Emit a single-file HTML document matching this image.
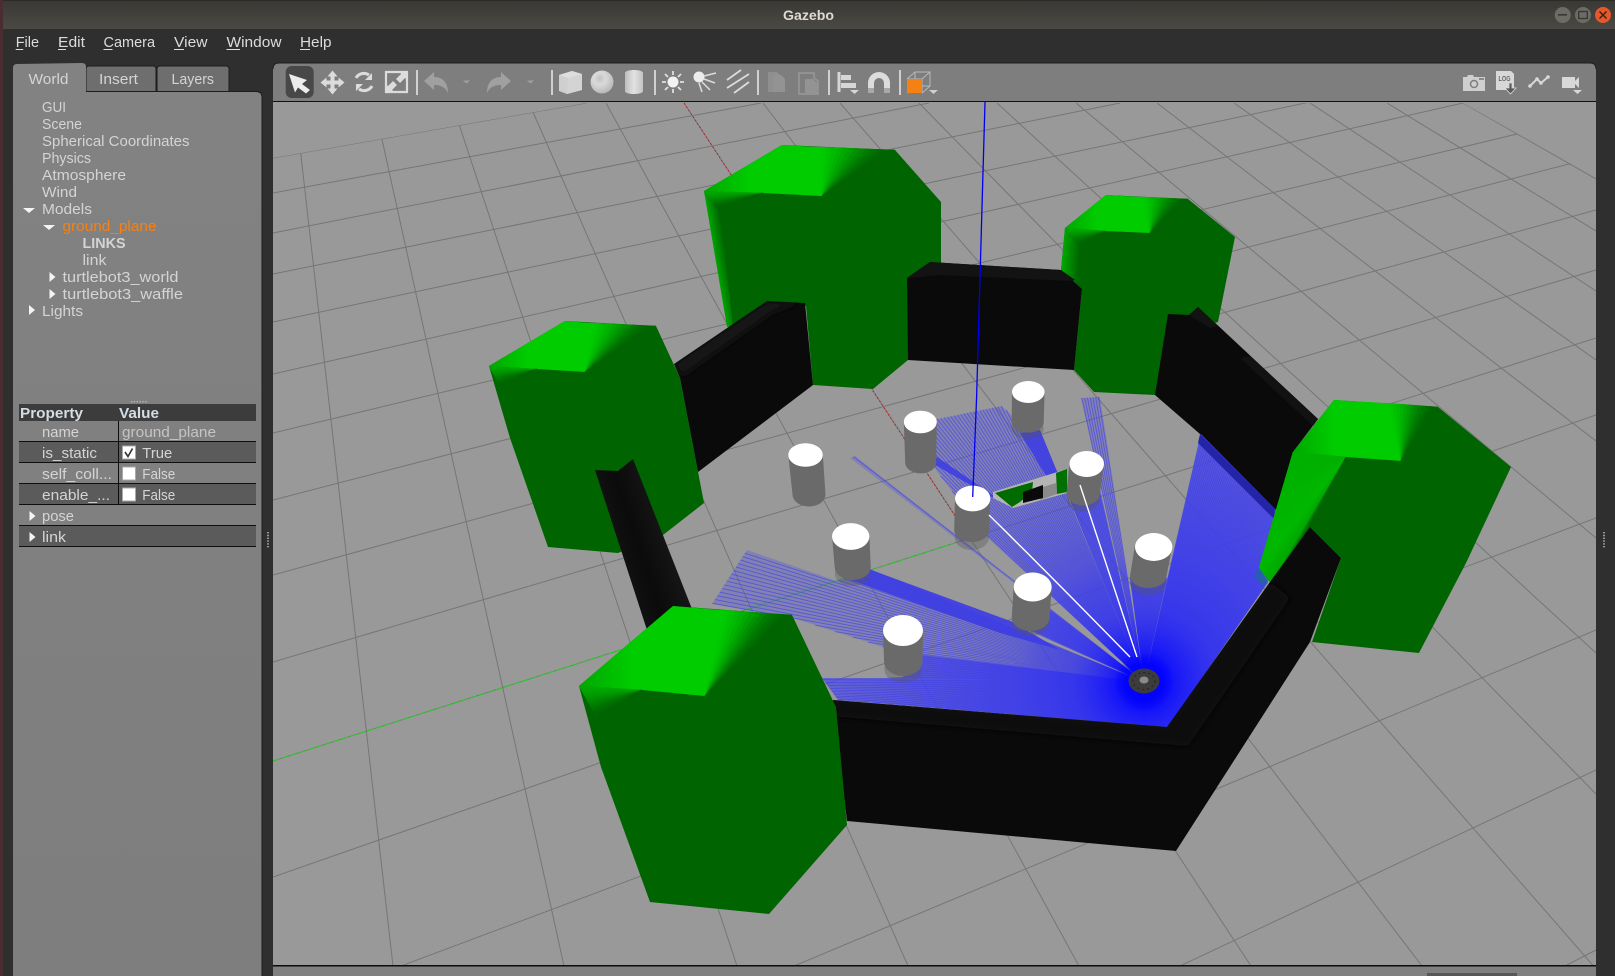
<!DOCTYPE html>
<html><head><meta charset="utf-8"><title>Gazebo</title>
<style>
html,body{margin:0;padding:0;background:#2f2f2f;width:1615px;height:976px;overflow:hidden}
svg{display:block;overflow:hidden}
text{font-family:"Liberation Sans",sans-serif}
.t{font-size:15px;fill:#d4d4d4}
.m{font-size:15px;fill:#dcdcdc}
</style></head><body>
<svg xmlns="http://www.w3.org/2000/svg" width="1615" height="976" viewBox="0 0 1615 976">
<defs>
<linearGradient id="tb" x1="0" y1="0" x2="0" y2="1"><stop offset="0" stop-color="#393834"/><stop offset="1" stop-color="#4a4944"/></linearGradient>
<linearGradient id="pn" x1="0" y1="0" x2="0" y2="1"><stop offset="0" stop-color="#828282"/><stop offset="1" stop-color="#7e7e7e"/></linearGradient>
<linearGradient id="br" x1="0" y1="0" x2=".38" y2="0"><stop offset="0" stop-color="#00a800"/><stop offset="1" stop-color="#00cc00"/></linearGradient>
<linearGradient id="b1" gradientUnits="userSpaceOnUse" x1="715" y1="260" x2="727" y2="258"><stop offset="0" stop-color="#00a800"/><stop offset="1" stop-color="#006400"/></linearGradient>
<linearGradient id="b3" gradientUnits="userSpaceOnUse" x1="1063" y1="250" x2="1080" y2="251"><stop offset="0" stop-color="#00a800"/><stop offset="1" stop-color="#006400"/></linearGradient>
<linearGradient id="st" gradientUnits="userSpaceOnUse" x1="605" y1="545" x2="665" y2="525"><stop offset="0" stop-color="#141414"/><stop offset=".5" stop-color="#0b0b0b"/><stop offset="1" stop-color="#161616"/></linearGradient>
<radialGradient id="glow" gradientUnits="userSpaceOnUse" cx="1144" cy="682" r="130"><stop offset="0" stop-color="#0000ff" stop-opacity="1"/><stop offset=".2" stop-color="#0808ff" stop-opacity=".8"/><stop offset=".55" stop-color="#2a2af0" stop-opacity=".35"/><stop offset="1" stop-color="#3a3ae8" stop-opacity="0"/></radialGradient>
<radialGradient id="core" gradientUnits="userSpaceOnUse" cx="1144" cy="682" r="30"><stop offset="0" stop-color="#0000ff" stop-opacity="1"/><stop offset=".6" stop-color="#0000ff" stop-opacity=".8"/><stop offset="1" stop-color="#0000ff" stop-opacity="0"/></radialGradient>
<radialGradient id="fa" gradientUnits="userSpaceOnUse" cx="1144" cy="682" r="340"><stop offset="0" stop-color="#2222f4" stop-opacity="1"/><stop offset=".5" stop-color="#3a3af0" stop-opacity=".75"/><stop offset="1" stop-color="#4a4ae8" stop-opacity=".5"/></radialGradient>
<radialGradient id="fd" gradientUnits="userSpaceOnUse" cx="1144" cy="682" r="260"><stop offset="0" stop-color="#3030f0" stop-opacity=".75"/><stop offset="1" stop-color="#4a4ae8" stop-opacity="0"/></radialGradient>
<radialGradient id="sph" cx=".4" cy=".35" r=".75"><stop offset="0" stop-color="#c2c2c2"/><stop offset=".35" stop-color="#dadada"/><stop offset="1" stop-color="#b0b0b0"/></radialGradient>
<linearGradient id="cyl" x1="0" y1="0" x2="1" y2="0"><stop offset="0" stop-color="#bdbdbd"/><stop offset=".5" stop-color="#e2e2e2"/><stop offset="1" stop-color="#c4c4c4"/></linearGradient>
<filter id="bl" x="-20%" y="-20%" width="140%" height="140%"><feGaussianBlur stdDeviation="3.5"/></filter>
<clipPath id="vp"><rect x="273" y="102" width="1323" height="863"/></clipPath>
<clipPath id="gc"><polygon points="273,158 586,103 1463,103 1596,178 1596,965 273,965"/></clipPath>
<clipPath id="wa"><polygon points="674,364 767,301 805,303 813,385 698,472 680,378"/></clipPath>
<clipPath id="wd"><polygon points="1310,527 1341,558 1310,642 1176,851 847,821 833,700 1167,727 1270,582"/></clipPath>
<g id="fans">
<polygon class="fan" points="1144,682 1201,434 1276,510 1259,568 1268,582 1168,727 838,700 822,678 885,678 903,677 923,655 883,647 793,618 712,604 747,550 837,581 872,570"/>
<polygon class="fan" points="1144,682 1013,622 1030,631 1050,610"/>
<polygon class="fan" points="1144,682 850,458 855,456"/>
<polygon class="fan" points="1144,682 985,535 930,462 933,420 1002,406 1030,433 1040,430"/>
<polygon class="fan" points="1144,682 1067,493 1083,505 1100,490"/>
<polygon class="fan" points="1144,682 1081,398 1100,397"/>
<polygon class="fan" points="1144,682 1130,578 1148,588 1167,578"/>
</g>
</defs>

<!-- window chrome -->
<rect width="1615" height="976" fill="#2f2f2f"/>
<rect x="0" y="0" width="3" height="976" fill="#4a2c33"/>
<rect x="3" y="0" width="1612" height="29" fill="url(#tb)"/>
<rect x="3" y="0" width="1612" height="1" fill="#2c2b28"/>
<text x="783" y="20" font-size="14" font-weight="bold" fill="#dfdbd2" textLength="51" lengthAdjust="spacingAndGlyphs">Gazebo</text>
<circle cx="1562.7" cy="15" r="8" fill="#6c6b66"/><rect x="1558" y="14" width="9" height="1.6" fill="#3a3935"/>
<circle cx="1583" cy="15" r="8" fill="#6c6b66"/><rect x="1578.7" y="11.5" width="8.6" height="7" fill="none" stroke="#3a3935" stroke-width="1.4"/>
<circle cx="1603" cy="15" r="8" fill="#e6572a"/><path d="M1599.5 11.5l7 7m0-7l-7 7" stroke="#3c2318" stroke-width="1.5"/>

<!-- menu -->
<g>
<text class="m" x="15.7" y="47" textLength="23.3" lengthAdjust="spacingAndGlyphs">File</text>
<text class="m" x="58" y="47" textLength="27" lengthAdjust="spacingAndGlyphs">Edit</text>
<text class="m" x="103.5" y="47" textLength="51.5" lengthAdjust="spacingAndGlyphs">Camera</text>
<text class="m" x="174" y="47" textLength="33.5" lengthAdjust="spacingAndGlyphs">View</text>
<text class="m" x="226.5" y="47" textLength="55" lengthAdjust="spacingAndGlyphs">Window</text>
<text class="m" x="300" y="47" textLength="31.5" lengthAdjust="spacingAndGlyphs">Help</text>
<path d="M15.7 49.5h7.5M58 49.5h8M103.5 49.5h9M174 49.5h10M226.5 49.5h13.5M300 49.5h10" stroke="#dcdcdc" stroke-width="1"/>
</g>

<!-- left panel -->
<path d="M86 92V69q0-3 3-3h64q3 0 3 3v23z" fill="#6e6e6e" stroke="#1c1c1c"/>
<path d="M157 92V69q0-3 3-3h66q3 0 3 3v23z" fill="#6e6e6e" stroke="#1c1c1c"/>
<path d="M13 976V68q0-4 4-4l65-1q4 0 4 4v25h170q6 0 6 6v878z" fill="url(#pn)"/>
<path d="M86 91.5h170q6 0 6 6V976" fill="none" stroke="#1d1d1d" stroke-width="1"/>
<text class="t" x="28.5" y="84" textLength="40" lengthAdjust="spacingAndGlyphs">World</text>
<text class="t" x="99" y="84" textLength="39" lengthAdjust="spacingAndGlyphs">Insert</text>
<text class="t" x="171.5" y="84" textLength="42.5" lengthAdjust="spacingAndGlyphs">Layers</text>

<text class="t" x="42" y="112" textLength="24" lengthAdjust="spacingAndGlyphs">GUI</text>
<text class="t" x="42" y="129" textLength="40" lengthAdjust="spacingAndGlyphs">Scene</text>
<text class="t" x="42" y="146" textLength="147.5" lengthAdjust="spacingAndGlyphs">Spherical Coordinates</text>
<text class="t" x="42" y="163" textLength="49" lengthAdjust="spacingAndGlyphs">Physics</text>
<text class="t" x="42" y="180" textLength="84" lengthAdjust="spacingAndGlyphs">Atmosphere</text>
<text class="t" x="42" y="197" textLength="35" lengthAdjust="spacingAndGlyphs">Wind</text>
<text class="t" x="42" y="214" textLength="50" lengthAdjust="spacingAndGlyphs">Models</text>
<text class="t" x="62.5" y="231" textLength="94" lengthAdjust="spacingAndGlyphs" style="fill:#f58113">ground_plane</text>
<text class="t" x="82.5" y="248" textLength="43" lengthAdjust="spacingAndGlyphs" font-weight="bold">LINKS</text>
<text class="t" x="82.5" y="265" textLength="24" lengthAdjust="spacingAndGlyphs">link</text>
<text class="t" x="62.5" y="282" textLength="116" lengthAdjust="spacingAndGlyphs">turtlebot3_world</text>
<text class="t" x="62.5" y="299" textLength="120.5" lengthAdjust="spacingAndGlyphs">turtlebot3_waffle</text>
<text class="t" x="42" y="316" textLength="41" lengthAdjust="spacingAndGlyphs">Lights</text>
<path d="M23 208h12l-6 5zM43 225h12l-6 5zM49.5 272l6 5-6 5zM49.5 289l6 5-6 5zM29 305l6 5-6 5z" fill="#f4f4f4"/>

<!-- property table -->
<path d="M131 401.7h17" stroke="#b5b5b5" stroke-width="1.4" stroke-dasharray="1.4 1.4"/>
<rect x="19" y="404" width="237" height="17" fill="#3c3c3c"/>
<text x="20" y="418" font-size="15" font-weight="bold" fill="#d4dce4" textLength="63" lengthAdjust="spacingAndGlyphs">Property</text>
<text x="119" y="418" font-size="15" font-weight="bold" fill="#d4dce4" textLength="40" lengthAdjust="spacingAndGlyphs">Value</text>
<rect x="19" y="442" width="237" height="20" fill="#5b5b5b"/>
<rect x="19" y="484" width="237" height="20" fill="#5b5b5b"/>
<rect x="19" y="526" width="237" height="20" fill="#5b5b5b"/>
<path d="M19 441.5h237M19 462.5h237M19 483.5h237M19 504.5h237M19 525.5h237M19 546.5h237" stroke="#0e0e0e"/>
<path d="M118.5 421v84" stroke="#0e0e0e"/>
<text class="t" x="42" y="437" textLength="37" lengthAdjust="spacingAndGlyphs">name</text>
<text class="t" x="122" y="437" textLength="94" lengthAdjust="spacingAndGlyphs" style="fill:#c4c4c4">ground_plane</text>
<text class="t" x="42" y="458" textLength="55" lengthAdjust="spacingAndGlyphs">is_static</text>
<text class="t" x="42" y="479" textLength="70" lengthAdjust="spacingAndGlyphs">self_coll...</text>
<text class="t" x="42" y="500" textLength="68" lengthAdjust="spacingAndGlyphs">enable_...</text>
<text class="t" x="42" y="521" textLength="32" lengthAdjust="spacingAndGlyphs">pose</text>
<text class="t" x="42" y="542" textLength="24" lengthAdjust="spacingAndGlyphs">link</text>
<rect x="122.5" y="446" width="13" height="13" fill="#fff" stroke="#a8a8a8"/>
<path d="M125 452l3 4.5 4.5-8" fill="none" stroke="#333" stroke-width="1.6"/>
<rect x="122.5" y="467" width="13" height="13" fill="#fff" stroke="#a8a8a8"/>
<rect x="122.5" y="488" width="13" height="13" fill="#fff" stroke="#a8a8a8"/>
<text class="t" x="142.3" y="458" textLength="30" lengthAdjust="spacingAndGlyphs">True</text>
<text class="t" x="142.3" y="479" textLength="33" lengthAdjust="spacingAndGlyphs">False</text>
<text class="t" x="142.3" y="500" textLength="33" lengthAdjust="spacingAndGlyphs">False</text>
<path d="M29.5 511l6 5-6 5zM29.5 532l6 5-6 5z" fill="#f4f4f4"/>
<path d="M268 532v16" stroke="#9a9a9a" stroke-width="2" stroke-dasharray="1.4 1.4"/>
<path d="M1604 532v16" stroke="#9a9a9a" stroke-width="2" stroke-dasharray="1.4 1.4"/>

<!-- toolbar -->
<path d="M273 101V69q0-6 6-6h1311q6 0 6 6v32z" fill="#7e7e7e"/>
<path d="M273 69q0-6 6-6h1311q6 0 6 6" fill="none" stroke="#1f1f1f"/>
<rect x="285.7" y="66" width="28" height="32" rx="6" fill="#484848"/>
<path d="M289 74l18 6-5 4 8 6-4 3.500-8-6-3 5z" fill="#ececec"/>
<path d="M332.500 70.500l5 6h-3v4h4v-3l6 5-6 5v-3h-4v4h3l-5 6-5-6h3v-4h-4v3l-6-5 6-5v3h4v-4h-3z" fill="#dcdcdc"/>
<path d="M356 78a9 9 0 0 1 13-3M372 86a9 9 0 0 1-13 3" fill="none" stroke="#dcdcdc" stroke-width="3"/>
<path d="M372 73v7h-7zM356 91v-7h7z" fill="#dcdcdc"/>
<path d="M386 92V72h21v20z" fill="none" stroke="#dcdcdc" stroke-width="2.200"/>
<path d="M389 89l7-7M403 75l-7 7" stroke="#7e7e7e" stroke-width="5"/>
<path d="M400 72h8v8l-3-2-5 5-4-4 5-5zM385 92v-8l3 2 5-5 4 4-5 5 3 2z" fill="#dcdcdc"/>
<path d="M417 70v25M552 70v25M655 70v25M758 70v25M829 70v25M900 70v25" stroke="#e4e4e4" stroke-width="1.600"/>
<path d="M424 81l10-9v5c9 0 14 6 14 16-3-6-7-8-14-8v5z" fill="#a0a0a0"/>
<path d="M511 81l-10-9v5c-9 0-14 6-14 16 3-6 7-8 14-8v5z" fill="#a0a0a0"/>
<path d="M463 80.500h7l-3.500 3zM527 80.500h7l-3.500 3z" fill="#a0a0a0"/>
<path d="M559 75l13-4 10 3v16l-15 4-8-3z" fill="#cfcfcf"/><path d="M559 75l13-4 10 3-14 4z" fill="#dedede"/><path d="M568 78l14-4v16l-15 4z" fill="#d4d4d4"/>
<circle cx="602" cy="82" r="11.500" fill="url(#sph)"/>
<path d="M625 73c0-4 18-4 18 0v18c0 4-18 4-18 0z" fill="url(#cyl)"/>
<circle cx="673" cy="82" r="5.500" fill="#f2f2f2"/>
<path d="M673 71v4M673 89v4M662 82h4M680 82h4M665 74l3 3M678 87l3 3M681 74l-3 3M668 87l-3 3" stroke="#e0e0e0" stroke-width="1.800"/>
<circle cx="699" cy="77" r="5.500" fill="#ececec"/>
<path d="M704 76l12-3M704 79l11 4M702 82l8 8M699 83l3 9" stroke="#dcdcdc" stroke-width="1.500"/>
<path d="M727 80l14-10M727 88l22-14M734 93l15-11" stroke="#dcdcdc" stroke-width="1.800"/>
<path d="M768 72h9l5 5v15h-14z" fill="#8f8f8f"/><path d="M773 75h8l4 4v13h-12z" fill="#939393"/>
<path d="M799 73h15v5l4 3v13h-19z" fill="#7e7e7e" stroke="#989898" stroke-width="1.500"/><path d="M805 79h8l4 4v11h-12z" fill="#939393"/>
<path d="M839 72v20" stroke="#d6d6d6" stroke-width="3"/><rect x="841" y="75" width="10" height="5" fill="#d6d6d6"/><rect x="841" y="83" width="15" height="5" fill="#d6d6d6"/><path d="M850 90h9l-4.500 4z" fill="#d6d6d6"/>
<path d="M868 93V83a11 11 0 0 1 22 0v10h-6V83a5 5 0 0 0-10 0v10z" fill="#dcdcdc"/><path d="M868 88h6v5h-6zM884 88h6v5h-6z" fill="#a8a8a8"/>
<path d="M907 79l8-7h15v14l-8 7M915 72v14h15M915 86l-8 7M922 79v14M907 79h15l8-7" fill="none" stroke="#b8b8b8"/>
<rect x="907" y="79" width="15" height="14" fill="#f58113"/><path d="M929 90h9l-4.500 4z" fill="#cfcfcf"/>
<path d="M1463 77h4l1-2h5l1 2h11v14h-22z" fill="#cfcfcf"/><circle cx="1474" cy="84" r="3.500" fill="none" stroke="#7e7e7e" stroke-width="1.500"/><rect x="1479" y="78" width="5" height="2" fill="#8a8a8a"/>
<path d="M1496 71h15l3 3v16h-18z" fill="#d8d8d8"/>
<text x="1498.500" y="81" font-size="7.500" font-weight="bold" fill="#666" textLength="12" lengthAdjust="spacingAndGlyphs">LOG</text>
<path d="M1509 83h3v5h4l-5.500 6-5.500-6h4z" fill="#5a5a5a" stroke="#d8d8d8" stroke-width=".8"/>
<path d="M1530 86l7-7 4 4 7-6" fill="none" stroke="#d8d8d8" stroke-width="2"/><circle cx="1530" cy="86" r="1.800" fill="#d8d8d8"/><circle cx="1537" cy="79" r="1.800" fill="#d8d8d8"/><circle cx="1541" cy="83" r="1.800" fill="#d8d8d8"/><circle cx="1548" cy="77" r="1.800" fill="#d8d8d8"/>
<rect x="1562" y="77" width="13" height="11" fill="#d8d8d8"/><path d="M1575 81l4-4v11l-4-4z" fill="#d8d8d8"/><path d="M1573 90h9l-4.500 4z" fill="#d8d8d8"/>
<rect x="273" y="101" width="1323" height="1.200" fill="#111"/>

<!-- viewport -->
<rect x="273" y="102" width="1323" height="863" fill="#999"/>
<g clip-path="url(#vp)">
<g clip-path="url(#gc)" stroke="#767676" stroke-width="1" fill="none">
<path d="M273 158L586 103M273 193L761 103M273 233L929 103M273 274L1120 103M273 322L1310 102M273 374L1463 103M273 433L1596 115M273 500L1596 157M273 575L1596 210M273 662L1596 270M273 761L1596 338M273 877L1596 415M401 966L1596 518M794 966L1596 630M1180 966L1596 770M1565 966L1596 950"/>
<path d="M295 103L393 966M374 103L564 966M452 103L737 966M529 103L908 966M606 103L1079 966M684 103L1251 966M763 103L1422 966M840 103L1593.500 966M919 103L1596 794M997 103L1596 653M1076 103L1596 538M1157 103L1596 441M1234 103L1596 360M1310 103L1596 291M1387 103L1596 231M1463 103L1596 179"/>
</g>
<path d="M273 761L955 543" stroke="#1fd01f" stroke-width="1" stroke-dasharray="7 2"/>
<path d="M684 103L959 522" stroke="#b42020" stroke-width=".9" stroke-dasharray="2 2"/>

<!-- wall C behind laser -->
<polygon points="1168,314 1189,315 1198,307 1318,419 1293,452 1276,510 1200,434 1155,395" fill="#0a0a0a"/>
<polygon points="1198,307 1318,419 1313,426 1192,313" fill="#121212"/>

<!-- laser -->
<use href="#fans" fill="#5a5ade" fill-opacity=".36"/>
<polygon points="1144,682 1168,727 838,700 822,678 885,678 903,677 923,655" fill="url(#fa)"/>
<polygon points="1144,682 1201,434 1276,510 1259,568 1268,582 1168,727" fill="url(#fa)"/>
<polygon points="1144,682 985,535 930,462 933,420 1002,406 1030,433 1040,430" fill="url(#fd)"/>
<polygon points="1144,682 1013,622 1030,631 1050,610" fill="#3c3cee" fill-opacity=".6"/>
<polygon points="1144,682 1067,493 1083,505 1100,490" fill="#3c3cee" fill-opacity=".6"/>
<polygon points="1144,682 1130,578 1148,588 1167,578" fill="#3c3cee" fill-opacity=".6"/>
<path id="rays" d="" fill="none" stroke="#4040e8" stroke-opacity=".62" stroke-width="1"/>
<use href="#fans" fill="url(#glow)"/>
<circle cx="1144" cy="682" r="30" fill="url(#core)"/>
<polygon points="866,568 1013,622 1060,650 1000,633 850,580" fill="#3c3ce4" fill-opacity=".9"/>
<polygon points="1020,433 1040,430 1057,472 1047,477" fill="#3c3ce4" fill-opacity=".85"/>
<polygon points="930,462 937,457 993,495 993,498" fill="#3c3ce4" fill-opacity=".85"/>
<polygon points="1200,434 1275,509 1274,519 1198,443" fill="#2424a8"/>

<!-- cylinder shadows -->
<g fill="#555" fill-opacity=".35">
<ellipse cx="903.300" cy="669" rx="19" ry="14"/><ellipse cx="1030.700" cy="623" rx="19" ry="13"/><ellipse cx="1148.300" cy="583" rx="18" ry="12"/>
<ellipse cx="1027.700" cy="429" rx="16" ry="10"/><ellipse cx="971.700" cy="538" rx="17" ry="12"/><ellipse cx="852.700" cy="574" rx="18" ry="12"/><ellipse cx="1083.300" cy="500" rx="16" ry="12"/>
</g>
<!-- camera sensor strip -->
<polygon points="993,492 1067,469 1067,493 1013,508 993,498" fill="#b4b4b4"/>
<polygon points="1040,488 1056,483 1057,494 1040,500" fill="#8a8a8a"/>
<polygon points="995,493 1033,482 1032,492 1020,502 1012,507" fill="#006c00"/>
<polygon points="1023,492 1043,485 1043,498 1023,503" fill="#0a0a0a"/>
<polygon points="1056,473 1067,469 1067,492 1057,494" fill="#007000"/>
<!-- cylinders -->
<g fill="#6a6a6a">
<path d="M788.200 454.500L792.500 494.500A16.500 12 0 0 0 825.500 494.500L822.800 454.500Z"/>
<path d="M903.800 421.700L905.200 462.700A15.500 10.700 0 0 0 936.200 462.700L936.800 421.700Z"/>
<path d="M1012 391L1011.700 422.700A16 10 0 0 0 1043.700 422.700L1044.600 391Z"/>
<path d="M955 498L954.200 530A17.500 12 0 0 0 989.200 530L990.400 498Z"/>
<path d="M1069.400 462.700L1066.600 493.300A16.700 12.300 0 0 0 1100 493.300L1104 462.700Z"/>
<path d="M832 535.700L834.700 567.300A18 12.700 0 0 0 870.700 567.300L869.400 535.700Z"/>
<path d="M1013.700 586L1011.700 617.300A19 13.700 0 0 0 1049.700 617.300L1051.700 586Z"/>
<path d="M1135 545L1130 576A18.300 12 0 0 0 1166.600 576L1172.400 545Z"/>
<path d="M883 630L884.100 661.700A19.200 14.300 0 0 0 922.500 661.700L923 630Z"/>
</g>
<g fill="#fff">
<ellipse cx="805.500" cy="455" rx="17.300" ry="11.800"/>
<ellipse cx="920.300" cy="422" rx="16.500" ry="11.300"/>
<ellipse cx="1028.300" cy="392" rx="16.300" ry="11"/>
<ellipse cx="972.700" cy="498.500" rx="17.700" ry="12.900"/>
<ellipse cx="1086.700" cy="464" rx="17.300" ry="13"/>
<ellipse cx="850.700" cy="536.500" rx="18.700" ry="13.400"/>
<ellipse cx="1032.700" cy="587" rx="19" ry="14.500"/>
<ellipse cx="1153.700" cy="547" rx="18.700" ry="14"/>
<ellipse cx="903" cy="630.500" rx="20" ry="15.500"/>
</g>
<!-- white sensor lines -->
<path d="M989 515Q1050 575 1130 657M1080 485L1137 657" fill="none" stroke="#fff" stroke-width="1.400"/>
<!-- robot -->
<ellipse cx="1144" cy="681" rx="15.500" ry="12.500" fill="#3c3c3c"/>
<ellipse cx="1144" cy="681" rx="11" ry="8.500" fill="none" stroke="#222" stroke-width="1" stroke-dasharray="2 3"/>
<ellipse cx="1144" cy="680" rx="4.500" ry="3.500" fill="#8a8a8a"/>

<!-- box 1 -->
<polygon points="704,191 782,145 895,150 941,202 941,300 908,360 873,389 813,385 806,306 767,305 730,330" fill="#006400"/>
<polygon points="704,191 720,210 733,327 727,327" fill="url(#b1)"/>
<polygon points="704,191 782,145 815,147 822,196 763,193" fill="url(#br)"/>
<g id="c1"></g>
<!-- wall A -->
<polygon points="674,364 767,301 805,303 813,385 698,472 680,378" fill="#0a0a0a"/>
<g clip-path="url(#wa)"><polygon points="674,364 767,301 800,302 773,312 682,376" fill="#131313" filter="url(#bl)"/></g>
<!-- box 3 -->
<polygon points="1106,195 1188,199 1235,237 1218,322 1190,330 1155,395 1094,392 1074,370 1082,289 1061,270 1065,228" fill="#006400"/>
<polygon points="1065,228 1080,247 1082,289 1061,270" fill="url(#b3)"/>
<polygon points="1065,228 1106,195 1140,197 1150,233 1106,231" fill="url(#br)"/>
<g id="c3"></g>
<!-- wall B -->
<polygon points="907,278 930,262 1061,270 1082,289 1074,370 908,360" fill="#0a0a0a"/>
<polygon points="907,278 930,262 1061,270 1075,280 1072,281 940,275" fill="#131313"/>
<!-- wall C top over box 3 -->
<polygon points="1168,314 1189,315 1198,307 1250,356 1210,365 1155,395" fill="#0a0a0a"/>
<polygon points="1189,315 1198,307 1218,326 1210,328" fill="#131313"/>
<!-- box 2 -->
<polygon points="489,366 565,321 656,326 680,378 704,503 663,535 618,553 548,547 510,438" fill="#006400"/>
<polygon points="489,366 565,321 590,323 585,372 537,369" fill="url(#br)"/>
<g id="c2"></g>
<!-- wall strip -->
<polygon points="595,470 618,471 633,459 692,609 647,630" fill="url(#st)"/>
<!-- box 4 -->
<polygon points="1334,400 1438,407 1511,467 1466,563 1419,653 1312,642 1341,558 1310,527 1270,582 1259,568 1293,452" fill="#006400"/>
<polygon points="1293,452 1334,400 1385,403 1401,461 1346,457" fill="url(#br)"/>
<g id="c4"></g>
<polygon points="1259,568 1269,580 1263,586 1254,576" fill="#1a6a9a" fill-opacity=".7"/>
<!-- wall D/E -->
<polygon points="1310,527 1341,558 1310,642 1176,851 847,821 833,700 1167,727 1270,582" fill="#0a0a0a"/>
<g clip-path="url(#wd)"><polygon points="830,700 1167,727 1270,582 1290,598 1188,746 830,716" fill="#0f0f0f" filter="url(#bl)"/></g>
<!-- box 5 -->
<polygon points="579,686 673,606 792,615 836,707 847,825 769,914 650,902 601,767" fill="#006400"/>
<polygon points="579,686 673,606 720,610 705,696 642,690" fill="url(#br)"/>
<g id="c5"></g>
<!-- z axis -->
<path d="M985 102L976.600 397L972.700 497" fill="none" stroke="#0000f0" stroke-width="1.300"/>
</g>
<rect x="273" y="965" width="1323" height="1.500" fill="#0c0c0c"/>
<rect x="273" y="966.500" width="1323" height="9.500" fill="#808080"/>
<rect x="1427" y="973" width="90" height="3" fill="#585858"/>
</svg>
<script>
(function(){
var Ox=1144,Oy=682,step=0.0094,d='',fans=document.querySelectorAll('#fans .fan');
for(var f=0;f<fans.length;f++){
 var p=fans[f].getAttribute('points').trim().split(/\s+/).map(function(s){return s.split(',').map(Number)});
 for(var i=1;i<p.length-1;i++){
  var P=p[i],Q=p[i+1],a1=Math.atan2(P[1]-Oy,P[0]-Ox),a2=Math.atan2(Q[1]-Oy,Q[0]-Ox),dl=a2-a1;
  while(dl>Math.PI)dl-=2*Math.PI;while(dl<-Math.PI)dl+=2*Math.PI;
  a2=a1+dl;var lo=Math.min(a1,a2),hi=Math.max(a1,a2);
  for(var k=Math.ceil(lo/step);k*step<=hi;k++){
   var a=k*step,dx=Math.cos(a),dy=Math.sin(a),ex=Q[0]-P[0],ey=Q[1]-P[1],den=dx*ey-dy*ex;
   if(Math.abs(den)<1e-6)continue;
   var t=((P[0]-Ox)*ey-(P[1]-Oy)*ex)/den;
   if(t<=0)continue;
   d+='M'+Ox+' '+Oy+'L'+(Ox+t*dx).toFixed(1)+' '+(Oy+t*dy).toFixed(1);
  }
 }
}
document.getElementById('rays').setAttribute('d',d);

var NS='http://www.w3.org/2000/svg';
function ss(t){return t*t*(3-2*t)}
function cone(id,c,pts){
 var g=document.getElementById(id);
 for(var i=0;i<pts.length-1;i++){
  var A=pts[i],B=pts[i+1],n=14;
  for(var j=0;j<n;j++){
   var t0=j/n,t1=(j+1)/n,m=ss((j+.5)/n),G=Math.round(A[2]+(B[2]-A[2])*m);
   var e=document.createElementNS(NS,'polygon');
   e.setAttribute('points',c[0]+','+c[1]+' '+(A[0]+(B[0]-A[0])*t0)+','+(A[1]+(B[1]-A[1])*t0)+' '+(A[0]+(B[0]-A[0])*t1)+','+(A[1]+(B[1]-A[1])*t1));
   var col='rgb(0,'+G+',0)';
   e.setAttribute('fill',col);e.setAttribute('stroke',col);e.setAttribute('stroke-width','.5');
   g.appendChild(e);
  }
 }
}
var bright=204,dark=100,edge=168;
cone('c1',[822,196],[[815,147,bright],[895,150,dark]]);
cone('c1',[763,193],[[704,191,edge],[718,210,dark]]);
cone('c2',[585,372],[[590,323,bright],[656,326,dark]]);
cone('c2',[537,369],[[489,366,edge],[500,387,dark]]);
cone('c3',[1150,233],[[1140,197,bright],[1188,199,dark]]);
cone('c3',[1106,231],[[1065,228,edge],[1080,247,dark]]);
cone('c4',[1401,461],[[1385,403,bright],[1438,407,dark]]);
cone('c4',[1346,457],[[1293,452,176],[1259,568,184],[1270,582,172],[1310,527,dark]]);
cone('c5',[705,696],[[720,610,bright],[792,615,dark]]);
cone('c5',[642,690],[[579,686,edge],[598,720,dark]]);
})();
</script>
</body></html>
